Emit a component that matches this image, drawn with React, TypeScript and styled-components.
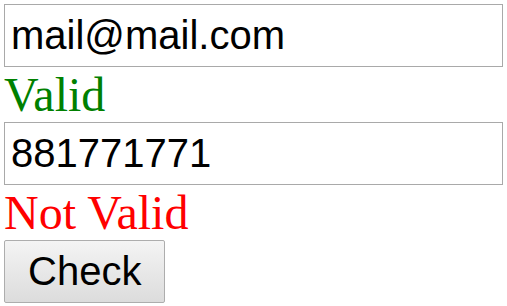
import React, { useState } from "react";
import styled, { createGlobalStyle } from "styled-components";

const GlobalStyle = createGlobalStyle`
  body {
    margin: 4px;
    background: #ffffff;
  }
`;

const Form = styled.div`
  display: flex;
  flex-direction: column;
  align-items: flex-start;
`;

const Field = styled.input`
  box-sizing: border-box;
  width: 100%;
  height: 63px;
  margin: 0;
  padding: 7px 6px;
  border: 1px solid #a9a9a9;
  font-family: "Liberation Sans", Arial, sans-serif;
  font-size: 40px;
  color: #000;
  background: #fff;
  outline: none;
`;

const Status = styled.div<{ $ok: boolean }>`
  font-family: "Liberation Serif", "Times New Roman", serif;
  font-size: 48px;
  line-height: 55px;
  color: ${(p) => (p.$ok ? "#008000" : "#ff0000")};
`;

const CheckButton = styled.button`
  box-sizing: border-box;
  width: 161px;
  height: 63px;
  margin: 0;
  padding: 0 23px;
  border: 1px solid #adadad;
  border-radius: 2px;
  background: linear-gradient(#f4f4f4, #dcdcdc);
  font-family: "Liberation Sans", Arial, sans-serif;
  font-size: 40px;
  color: #000;
  cursor: pointer;
`;

const emailOk = (v: string) => /^[^@\s]+@[^@\s]+\.[^@\s]+$/.test(v);
const phoneOk = (v: string) => /^\+?\d{10,12}$/.test(v);

export default function App() {
  const [email, setEmail] = useState("mail@mail.com");
  const [phone, setPhone] = useState("881771771");

  return (
    <>
      <GlobalStyle />
      <Form>
        <Field value={email} onChange={(e) => setEmail(e.target.value)} />
        <Status $ok={emailOk(email)}>{emailOk(email) ? "Valid" : "Not Valid"}</Status>
        <Field value={phone} onChange={(e) => setPhone(e.target.value)} />
        <Status $ok={phoneOk(phone)}>{phoneOk(phone) ? "Valid" : "Not Valid"}</Status>
        <CheckButton>Check</CheckButton>
      </Form>
    </>
  );
}
